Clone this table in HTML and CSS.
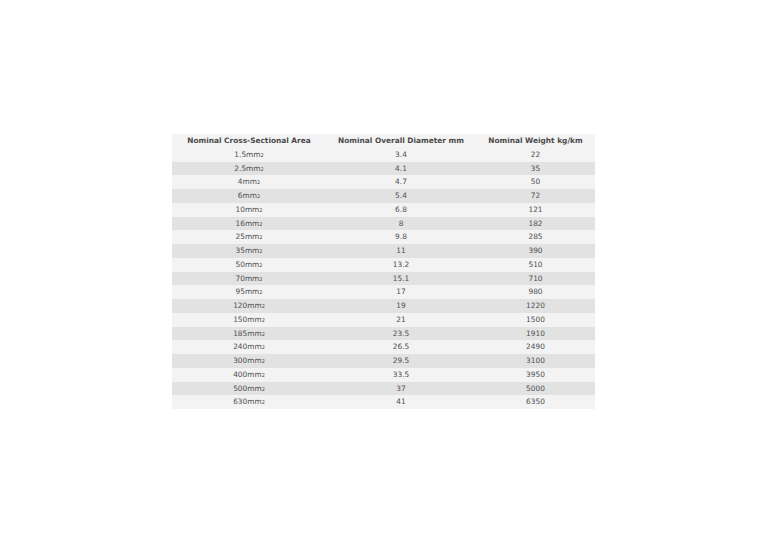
FILE: index.html
```html
<!DOCTYPE html>
<html>
<head>
<meta charset="utf-8">
<link rel="stylesheet" href="styles.css">
</head>
<body>
<div class="page">
<table class="spec">
<colgroup><col class="c1"><col class="c2"><col class="c3"></colgroup>
<thead>
<tr><th>Nominal Cross-Sectional Area</th><th>Nominal Overall Diameter mm</th><th>Nominal Weight kg/km</th></tr>
</thead>
<tbody>
<tr><td>1.5mm<sup>2</sup></td><td>3.4</td><td>22</td></tr>
<tr><td>2.5mm<sup>2</sup></td><td>4.1</td><td>35</td></tr>
<tr><td>4mm<sup>2</sup></td><td>4.7</td><td>50</td></tr>
<tr><td>6mm<sup>2</sup></td><td>5.4</td><td>72</td></tr>
<tr><td>10mm<sup>2</sup></td><td>6.8</td><td>121</td></tr>
<tr><td>16mm<sup>2</sup></td><td>8</td><td>182</td></tr>
<tr><td>25mm<sup>2</sup></td><td>9.8</td><td>285</td></tr>
<tr><td>35mm<sup>2</sup></td><td>11</td><td>390</td></tr>
<tr><td>50mm<sup>2</sup></td><td>13.2</td><td>510</td></tr>
<tr><td>70mm<sup>2</sup></td><td>15.1</td><td>710</td></tr>
<tr><td>95mm<sup>2</sup></td><td>17</td><td>980</td></tr>
<tr><td>120mm<sup>2</sup></td><td>19</td><td>1220</td></tr>
<tr><td>150mm<sup>2</sup></td><td>21</td><td>1500</td></tr>
<tr><td>185mm<sup>2</sup></td><td>23.5</td><td>1910</td></tr>
<tr><td>240mm<sup>2</sup></td><td>26.5</td><td>2490</td></tr>
<tr><td>300mm<sup>2</sup></td><td>29.5</td><td>3100</td></tr>
<tr><td>400mm<sup>2</sup></td><td>33.5</td><td>3950</td></tr>
<tr><td>500mm<sup>2</sup></td><td>37</td><td>5000</td></tr>
<tr><td>630mm<sup>2</sup></td><td>41</td><td>6350</td></tr>
</tbody>
</table>
</div>
</body>
</html>
```
FILE: styles.css
```css
html, body {
  margin: 0;
  padding: 0;
  background: #ffffff;
}
.page {
  width: 768px;
  height: 543px;
  padding: 134px 0 0 172px;
  box-sizing: border-box;
}
.spec {
  border-collapse: collapse;
  width: 423px;
  table-layout: fixed;
  font-family: "DejaVu Sans", sans-serif;
  font-size: 7.4px;
  color: #505050;
}
.c1 { width: 154px; }
.c2 { width: 150px; }
.c3 { width: 119px; }
.spec th, .spec td {
  height: 13.75px;
  padding: 0;
  text-align: center;
  vertical-align: middle;
  line-height: 13.75px;
}
.spec th {
  font-weight: 700;
  color: #4a4a4a;
  background: #f3f3f3;
}
.spec tbody tr:nth-child(odd) { background: #f3f3f3; }
.spec tbody tr:nth-child(even) { background: #e2e2e2; }
.spec sup {
  font-size: 5px;
  vertical-align: 0;
  line-height: 0;
}
```
